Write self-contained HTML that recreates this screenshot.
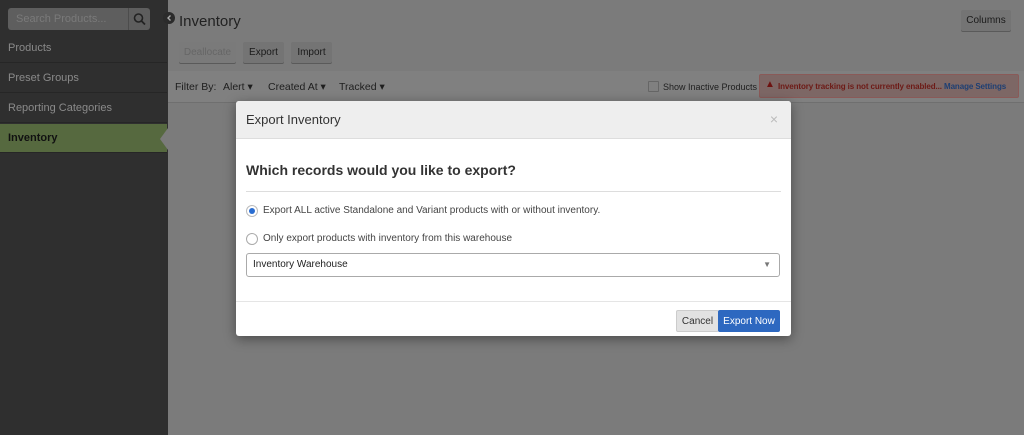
<!DOCTYPE html>
<html><head><style>
body{margin:0;width:1024px;height:435px;overflow:hidden;font-family:"Liberation Sans",sans-serif;background:#7b7b7b;position:relative}
.sb{position:absolute;left:0;top:0;width:168px;height:435px;background:#2f2f2f}
.search{position:absolute;left:8px;top:8px;width:142px;height:22px;background:#5e5e5e;border-radius:3px}
.search span{position:absolute;left:8px;top:5px;font-size:11px;color:#7a7a7a}
.search i{position:absolute;right:0;top:0;width:21px;height:22px;border-left:1px solid #4c4c4c}
.nav{position:absolute;left:0;width:167px;height:29px;border-bottom:1px solid #262626;font-size:11px;color:#8a8a8a;line-height:29px;padding-left:8px;box-sizing:border-box}
.act{background:#56693f;color:#111;font-weight:bold}
.main{position:absolute;left:168px;top:0;right:0;height:435px}
.t{position:absolute;left:11px;top:13px;font-size:15px;color:#222}
.btn{position:absolute;top:42px;height:21px;background:#747474;border-radius:2px;font-size:10px;color:#1a1a1a;display:flex;align-items:center;justify-content:center;box-shadow:0 1px 0 #5a5a5a}
.fb{position:absolute;left:0;right:0;top:71px;height:31px;background:#808080;border-bottom:1px solid #6f6f6f}
.fb span{position:absolute;top:10px;font-size:10.5px;color:#1e1e1e;white-space:nowrap}
.modal{position:absolute;left:236px;top:101px;width:555px;height:235px;background:#fff;border-radius:3px;box-shadow:0 3px 12px rgba(0,0,0,.4);overflow:hidden}
.mh{height:37px;background:#eee;border-bottom:1px solid #ddd;font-size:13px;color:#333;line-height:37px;padding-left:10px}
.radio{position:absolute;left:10px;width:10px;height:10px;border:1px solid #aaa;border-radius:50%}
.rl{position:absolute;left:27px;font-size:10px;color:#444}
.mb{position:absolute;top:209px;height:22px;border-radius:2px;font-size:10px;display:flex;align-items:center;justify-content:center;box-sizing:border-box}
</style></head><body>
<div class="sb">
<div class="search"><span>Search Products...</span><i><svg width="21" height="22"><circle cx="9.5" cy="10" r="4" fill="none" stroke="#222" stroke-width="1.6"/><line x1="12.5" y1="13" x2="16" y2="16.5" stroke="#222" stroke-width="1.8"/></svg></i></div>
<div class="nav" style="top:34px">Products</div>
<div class="nav" style="top:64px">Preset Groups</div>
<div class="nav" style="top:94px">Reporting Categories</div>
<div class="nav act" style="top:124px">Inventory</div>
<svg style="position:absolute;left:158px;top:128px" width="10" height="22"><polygon points="10,0 2,11 10,22" fill="#7b7b7b"/></svg>
</div>
<div class="main">
<div class="t">Inventory</div>
<div class="btn" style="left:11px;width:57px;color:#666;background:#7a7a7a">Deallocate</div>
<div class="btn" style="left:75px;width:41px">Export</div>
<div class="btn" style="left:123px;width:41px">Import</div>
<div class="btn" style="left:793px;top:10px;width:50px">Columns</div>
<div class="fb">
<span style="left:7px">Filter By:</span>
<span style="left:55px">Alert ▾</span>
<span style="left:100px">Created At ▾</span>
<span style="left:171px">Tracked ▾</span>
<div style="position:absolute;left:480px;top:10px;width:9px;height:9px;border:1px solid #666;border-radius:1px"></div>
<span style="left:495px;font-size:9px;top:11px">Show Inactive Products</span>
<div style="position:absolute;left:591px;top:3px;width:258px;height:22px;background:#7d6765;border:1px solid #8a5a58;border-radius:2px"></div>
<span style="left:597px;top:8px;color:#6e1210;font-size:10px">▲</span>
<span style="left:610px;top:11px;font-size:8px;font-weight:bold;color:#6d1a16;letter-spacing:-0.1px">Inventory tracking is not currently enabled... <b style="color:#1e3f73">Manage Settings</b></span>
</div>
</div>
<svg style="position:absolute;left:163px;top:12px" width="12" height="12"><circle cx="6" cy="6" r="6" fill="#2b2b2b"/><path d="M7.5 3.5L5 6l2.5 2.5" stroke="#aaa" stroke-width="1.4" fill="none"/></svg>
<div class="modal">
<div class="mh">Export Inventory<span style="position:absolute;right:13px;color:#bbb;font-size:14px">×</span></div>
<div style="position:absolute;left:10px;top:61px;font-size:14px;font-weight:bold;color:#333">Which records would you like to export?</div>
<div style="position:absolute;left:10px;right:10px;top:90px;border-top:1px solid #ddd"></div>
<div class="radio" style="top:104px;border-color:#bbb"><div style="margin:2px;width:6px;height:6px;border-radius:50%;background:#2a6dd1"></div></div>
<div class="rl" style="top:104px">Export ALL active Standalone and Variant products with or without inventory.</div>
<div class="radio" style="top:132px"></div>
<div class="rl" style="top:132px">Only export products with inventory from this warehouse</div>
<div style="position:absolute;left:10px;top:152px;width:534px;height:24px;border:1px solid #aaa;border-radius:3px;font-size:10px;color:#222;line-height:22px;padding-left:6px;box-sizing:border-box">Inventory Warehouse<span style="position:absolute;right:8px;color:#777;font-size:8px">▼</span></div>
<div style="position:absolute;left:0;right:0;top:200px;border-top:1px solid #e5e5e5"></div>
<div class="mb" style="left:440px;width:43px;background:#e2e2e2;border:1px solid #ccc;color:#333">Cancel</div>
<div class="mb" style="left:482px;width:62px;background:#2d68c0;color:#fff">Export Now</div>
</div>
</body></html>
